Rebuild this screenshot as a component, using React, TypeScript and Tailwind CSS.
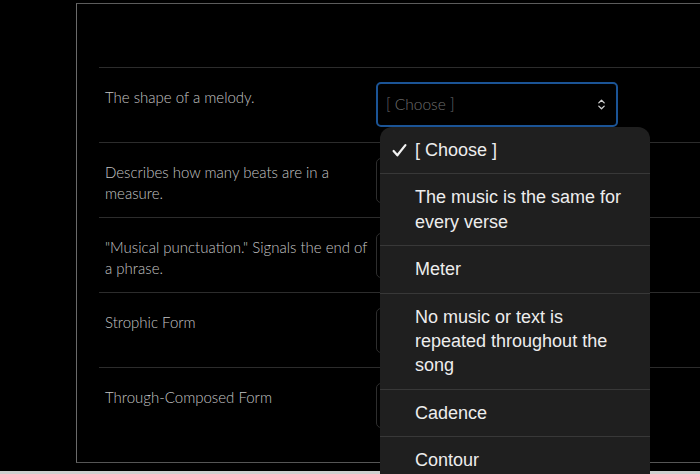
import { ChevronsUpDown } from 'lucide-react'

const rows = [
  'The shape of a melody.',
  'Describes how many beats are in a measure.',
  '"Musical punctuation." Signals the end of a phrase.',
  'Strophic Form',
  'Through-Composed Form',
]

const options = [
  '[ Choose ]',
  'The music is the same for every verse',
  'Meter',
  'No music or text is repeated throughout the song',
  'Cadence',
  'Contour',
]

function Check() {
  return (
    <svg width="15" height="15" viewBox="0 0 14 14" className="absolute left-[12px] top-[16px]">
      <path d="M1.5 7.5 L5 11.5 L12.5 2" fill="none" stroke="#f2f2f2" strokeWidth="2.1" strokeLinecap="round" strokeLinejoin="round" />
    </svg>
  )
}

export default function App() {
  return (
    <div className="relative w-[700px] h-[474px] overflow-hidden bg-black flex flex-col" style={{ fontFamily: 'Lato, "Open Sans", sans-serif' }}>
      {/* quiz card */}
      <div className="mt-[3px] ml-[76px] h-[460px] border-l border-t border-b border-l-[#6a6a6a] border-t-[#5c5c5c] border-b-[#555]">
        <div className="h-[63px]" />
        {rows.map((label, i) => (
          <div key={i} className="ml-[22px] h-[75px] border-t border-[#2c2c2c] flex">
            <div className="w-[277px] pl-[6px] pr-[4px] pt-[19px] text-[15px] leading-[21px] text-[#c4c4c4] font-light">
              {label}
            </div>
            {i === 0 ? (
              <div className="mt-[14px] w-[242px] h-[45px] rounded-[5px] border-2 border-[#1b5496] flex items-center justify-between pl-[8px] pr-[8px]">
                <span className="text-[15.5px] text-[#6e6e6e] font-light">[ Choose ]</span>
                <ChevronsUpDown size={13} strokeWidth={2.4} className="text-[#d0d0d0]" />
              </div>
            ) : (
              <div className="mt-[15px] w-[242px] h-[45px] rounded-[5px] border border-[#2e2e2e]" />
            )}
          </div>
        ))}
      </div>
      <div className="mt-auto h-[3px] bg-[#cfcfcf]" />

      {/* native select popup */}
      <div
        className="absolute left-[380px] top-[127px] w-[270px] rounded-t-[12px] bg-[#1f1f1f] text-[18px] leading-[24.4px] text-[#ededed]"
        style={{ fontFamily: '"Liberation Sans", Arial, sans-serif' }}
      >
        {options.map((opt, i) => (
          <div key={i} className="relative pl-[35px] pr-[12px] py-[11px] border-b border-[#383838]">
            {i === 0 && <Check />}
            {opt}
          </div>
        ))}
      </div>
    </div>
  )
}
